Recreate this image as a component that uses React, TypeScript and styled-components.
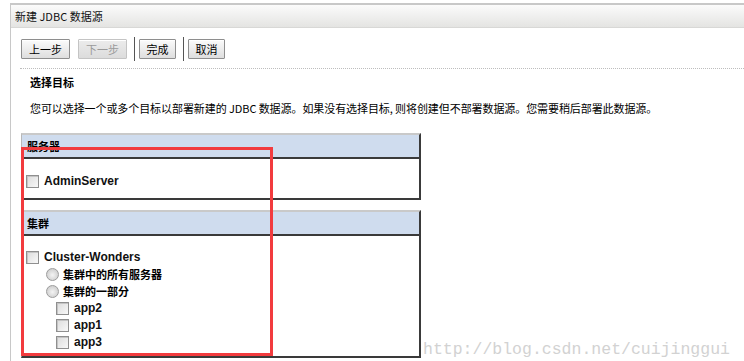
import styled, { createGlobalStyle } from 'styled-components';

const GlobalStyle = createGlobalStyle`
  html, body {
    margin: 0;
    padding: 0;
    background: #ffffff;
  }
  body {
    font-family: "Noto Sans CJK SC", "DejaVu Sans", sans-serif;
    font-size: 11px;
    color: #000;
  }
`;

const CJK = `"Noto Sans CJK SC", "DejaVu Sans", sans-serif`;
const LATIN = `"Liberation Sans", Arial, "Noto Sans CJK SC", sans-serif`;

const App = () => {
  return (
    <Page>
      <GlobalStyle />
      <Frame>
        <TitleBar>新建 JDBC 数据源</TitleBar>
        <Content>
          <Toolbar>
            <Button $w={49}>上一步</Button>
            <Button $w={49} disabled>
              下一步
            </Button>
            <Divider />
            <Button $w={37}>完成</Button>
            <Divider />
            <Button $w={37}>取消</Button>
          </Toolbar>
          <DottedRule />
          <Heading>选择目标</Heading>
          <Intro>
            您可以选择一个或多个目标以部署新建的 JDBC 数据源。如果没有选择目标, 则将创建但不部署数据源。您需要稍后部署此数据源。
          </Intro>

          <Panel $first>
            <PanelHeader>服务器</PanelHeader>
            <PanelBody $pad="16px 0 11px 4px">
              <Row>
                <CheckBox />
                <Label>AdminServer</Label>
              </Row>
            </PanelBody>
          </Panel>

          <Panel>
            <PanelHeader>集群</PanelHeader>
            <PanelBody $pad="15px 0 8px 4px">
              <Row>
                <CheckBox />
                <Label>Cluster-Wonders</Label>
              </Row>
              <Row $indent={20}>
                <Radio />
                <CnLabel>集群中的所有服务器</CnLabel>
              </Row>
              <Row $indent={20}>
                <Radio />
                <CnLabel>集群的一部分</CnLabel>
              </Row>
              {['app2', 'app1', 'app3'].map((name) => (
                <Row key={name} $indent={30}>
                  <CheckBox />
                  <Label>{name}</Label>
                </Row>
              ))}
            </PanelBody>
          </Panel>
        </Content>
      </Frame>

      <Highlight />
      <Watermark>http://blog.csdn.net/cuijinggui</Watermark>
    </Page>
  );
};

const Page = styled.div`
  position: relative;
  width: 744px;
  height: 361px;
  overflow: hidden;
  padding-top: 3px;
  padding-left: 10px;
  box-sizing: border-box;
`;

const Frame = styled.div`
  border-top: 2px solid #c8c8c8;
  border-left: 1px solid #c8c8c8;
  height: 100%;
`;

const TitleBar = styled.div`
  height: 22px;
  line-height: 22px;
  padding-left: 4px;
  font-family: ${CJK};
  font-size: 11px;
  color: #111;
  background: linear-gradient(#fbfbfb, #e4e4e2);
  border-bottom: 1px solid #d8d8d6;
`;

const Content = styled.div`
  padding: 11px 0 0 10px;
`;

const Toolbar = styled.div`
  display: flex;
  align-items: center;
  height: 20px;
`;

const Button = styled.button<{ $w: number }>`
  width: ${({ $w }) => $w}px;
  height: 20px;
  padding: 0;
  margin: 0 8px 0 0;
  box-sizing: border-box;
  white-space: nowrap;
  font-family: ${CJK};
  font-size: 11px;
  line-height: 16px;
  color: ${({ disabled }) => (disabled ? '#9a9a9a' : '#000')};
  background: ${({ disabled }) =>
    disabled ? 'linear-gradient(#ececec, #dcdcdc)' : 'linear-gradient(#fbfbfb, #dedede)'};
  border: 1px solid ${({ disabled }) => (disabled ? '#c4c4c4' : '#8e8e8e')};
  border-radius: 1px;
  box-shadow: inset 0 1px 0 #fff;
  cursor: default;
`;

const Divider = styled.span`
  flex: none;
  width: 1px;
  height: 24px;
  background: #555;
  margin: 0 4px 0 -1px;
`;

const DottedRule = styled.div`
  margin-top: 9px;
  margin-left: -1px;
  border-top: 1px dotted #bdbdbd;
`;

const Heading = styled.div`
  margin: 5px 0 0 9px;
  font-family: ${CJK};
  font-weight: bold;
  font-size: 11px;
  line-height: 16px;
`;

const Intro = styled.p`
  margin: 10px 0 0 9px;
  font-family: ${CJK};
  font-size: 11px;
  line-height: 16px;
  letter-spacing: -0.08px;
  white-space: nowrap;
`;

const Panel = styled.div<{ $first?: boolean }>`
  width: 400px;
  box-sizing: border-box;
  border-top: 2px solid #c9c9c9;
  border-left: 1px solid #b8b8b8;
  border-right: 2px solid #3a3a3a;
  border-bottom: 2px solid #3a3a3a;
  margin-top: ${({ $first }) => ($first ? 17 : 10)}px;
`;

const PanelHeader = styled.div`
  height: 22px;
  line-height: 22px;
  padding-left: 5px;
  background: #cfdcee;
  border-bottom: 2px solid #3a3a3a;
  font-family: ${CJK};
  font-weight: bold;
  font-size: 11px;
`;

const PanelBody = styled.div<{ $pad: string }>`
  padding: ${({ $pad }) => $pad};
  display: flex;
  flex-direction: column;
  gap: 5px;
`;

const Row = styled.div<{ $indent?: number }>`
  display: flex;
  align-items: center;
  height: 12px;
  padding-left: ${({ $indent }) => $indent || 0}px;
`;

const CheckBox = styled.span`
  width: 11px;
  height: 11px;
  flex: none;
  border: 1px solid #8f8f8f;
  background: linear-gradient(135deg, #dcdcdc, #f8f8f8);
  box-shadow: inset 1px 1px 0 #c4c4c4;
  margin-right: 5px;
`;

const Radio = styled.span`
  width: 11px;
  height: 11px;
  flex: none;
  border-radius: 50%;
  border: 1px solid #9c9c9c;
  background: radial-gradient(circle at 50% 55%, #f4f4f4 0, #dedede 45%, #c4c4c4 100%);
  margin-right: 4px;
`;

const Label = styled.span`
  font-family: ${LATIN};
  font-weight: bold;
  font-size: 12px;
  line-height: 12px;
  color: #111;
`;

const CnLabel = styled.span`
  font-family: ${CJK};
  font-weight: bold;
  font-size: 11px;
  line-height: 12px;
`;

const Highlight = styled.div`
  position: absolute;
  left: 21px;
  top: 147px;
  width: 252px;
  height: 209px;
  box-sizing: border-box;
  border: 3px solid #f23b3e;
  pointer-events: none;
`;

const Watermark = styled.div`
  position: absolute;
  left: 423px;
  top: 340px;
  font-family: "Liberation Mono", "DejaVu Sans Mono", monospace;
  font-size: 16.5px;
  line-height: 20px;
  color: #d2d2d2;
  white-space: nowrap;
`;

export default App;
